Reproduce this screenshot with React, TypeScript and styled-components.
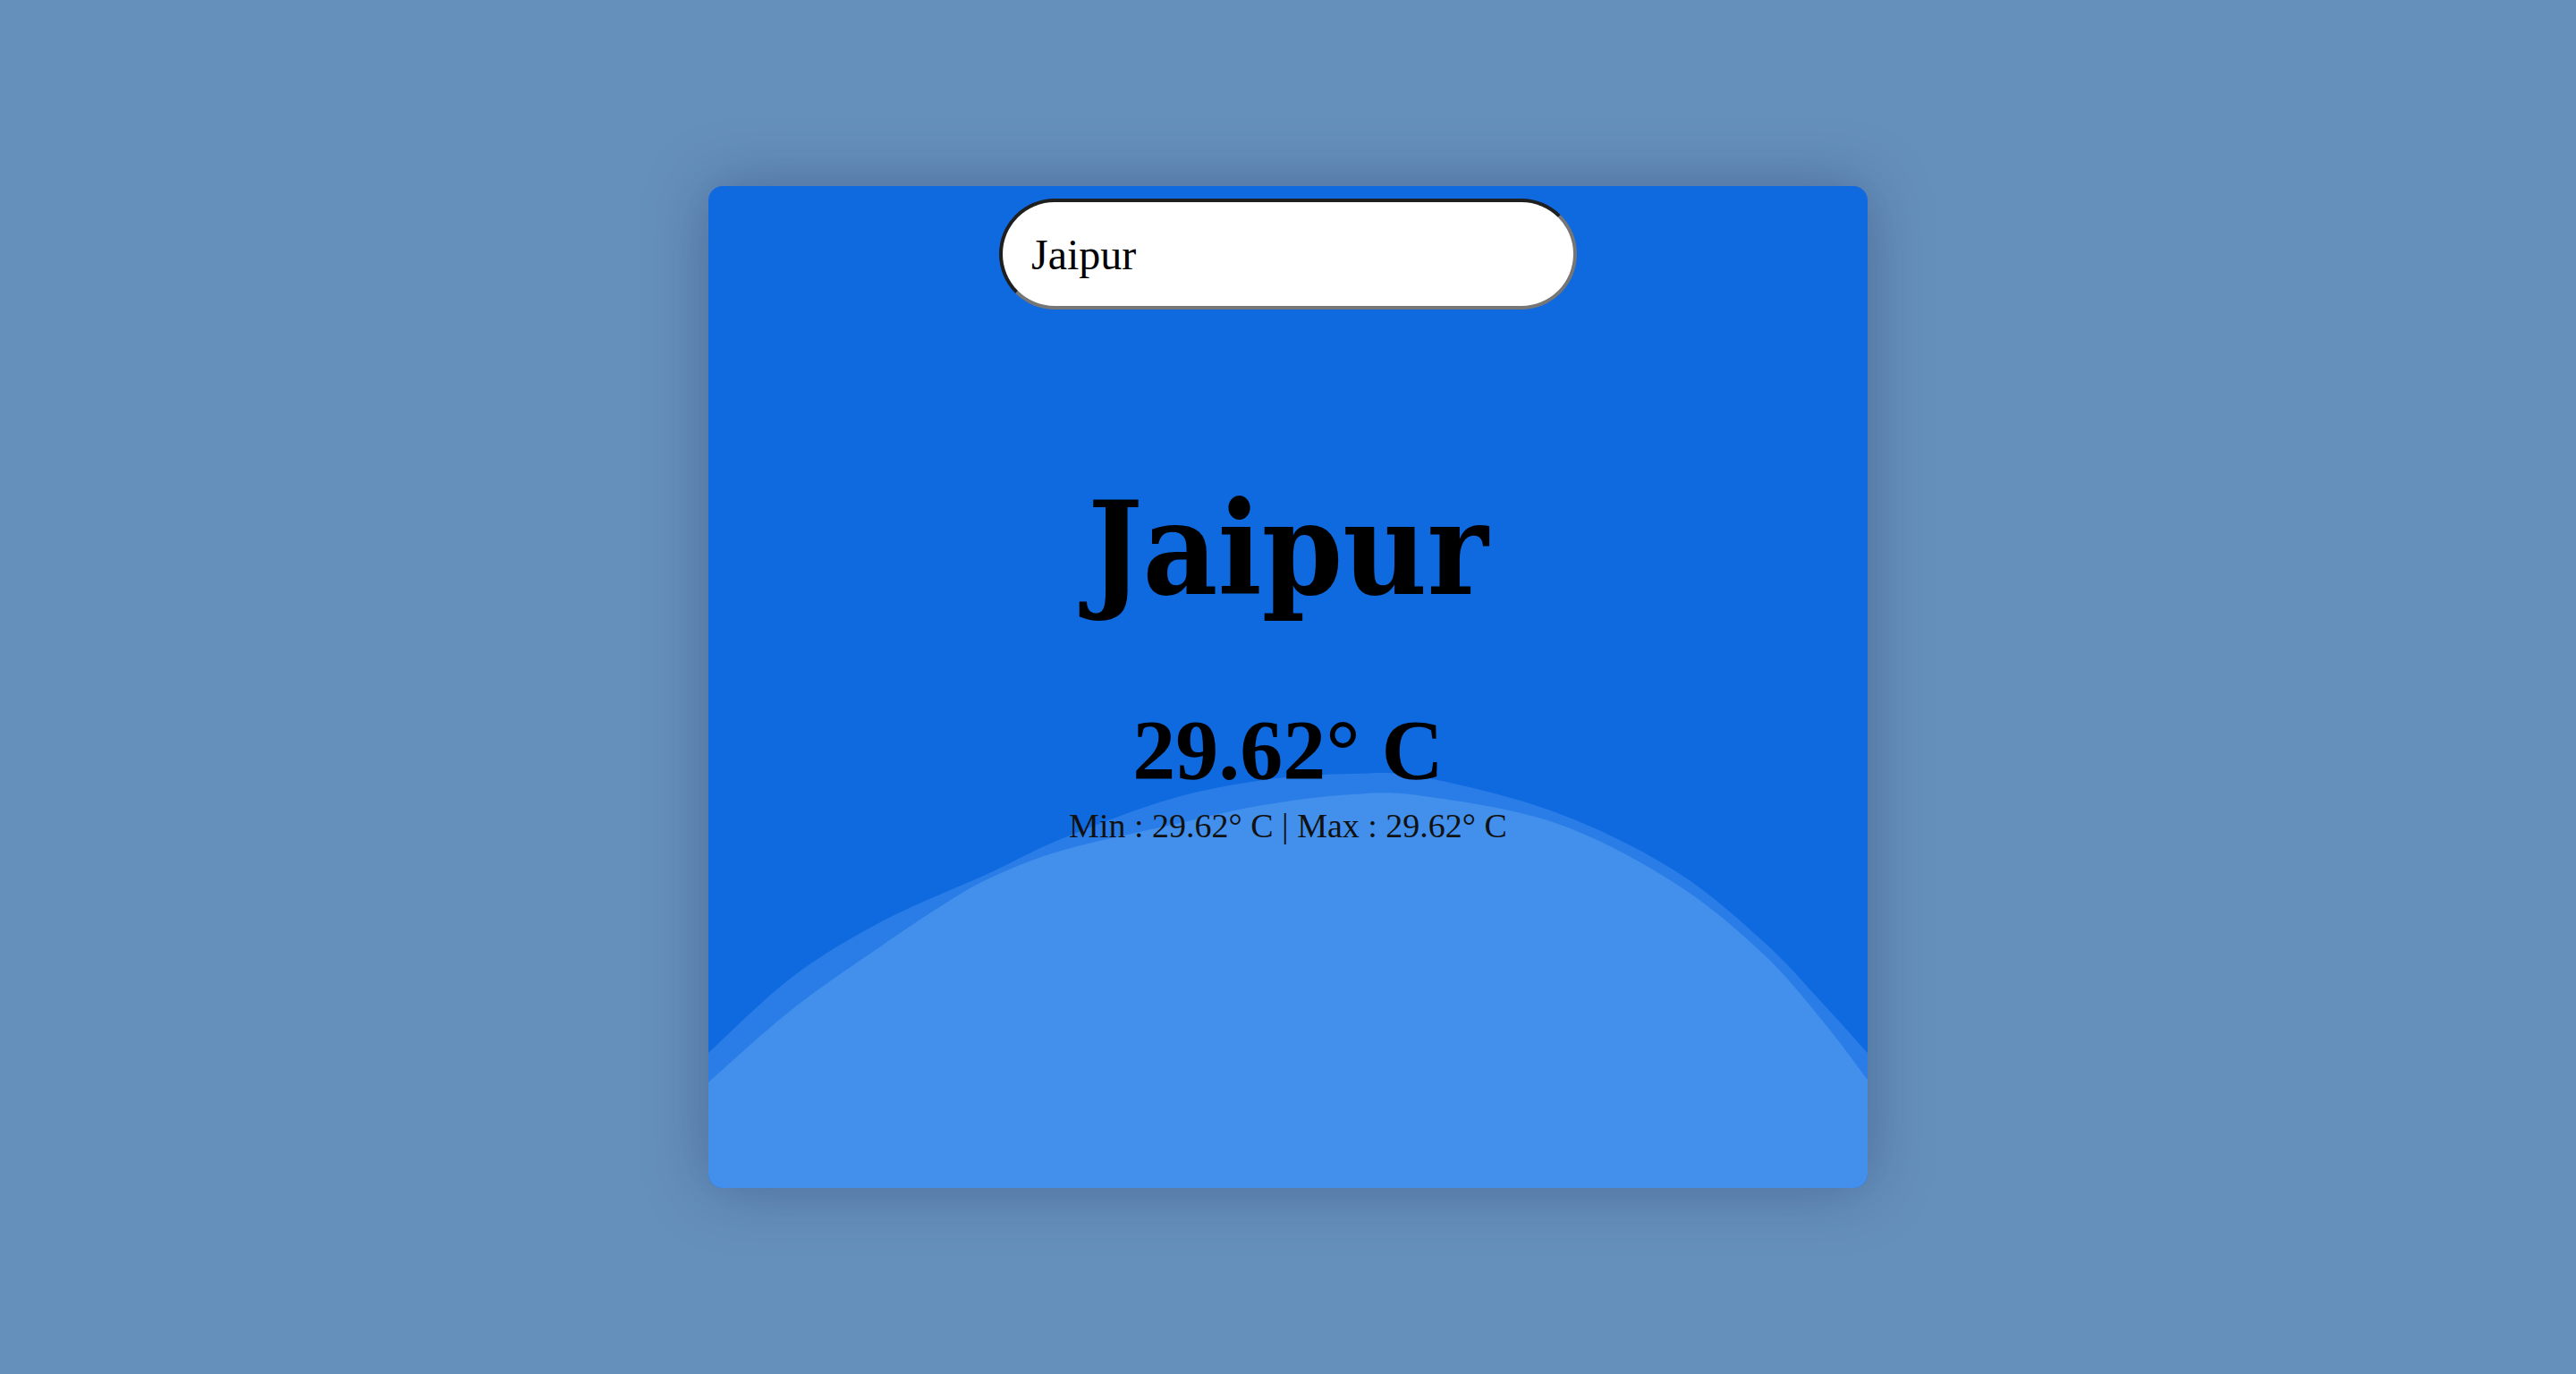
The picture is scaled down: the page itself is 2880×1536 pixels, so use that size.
import React from "react";
import styled, { createGlobalStyle } from "styled-components";

const GlobalStyle = createGlobalStyle`
  html, body {
    margin: 0;
    padding: 0;
  }
  body {
    background: #6690bc;
    font-family: "Liberation Serif", "Times New Roman", serif;
  }
`;

const Page = styled.div`
  min-height: 100vh;
  display: flex;
  align-items: center;
  justify-content: center;
`;

const Card = styled.div`
  position: relative;
  overflow: hidden;
  width: 1296px;
  height: 1120px;
  border-radius: 16px;
  background: #0f69df;
  box-shadow: 0 0 70px rgba(20, 40, 80, 0.35);
  display: flex;
  flex-direction: column;
  align-items: center;
`;

const Waves = styled.svg`
  position: absolute;
  inset: 0;
  width: 100%;
  height: 100%;
  z-index: 0;
`;

const Content = styled.div`
  position: relative;
  z-index: 1;
  display: flex;
  flex-direction: column;
  align-items: center;
  width: 100%;
`;

const Search = styled.input`
  box-sizing: border-box;
  width: 646px;
  height: 124px;
  margin-top: 14px;
  padding: 0 32px;
  border-radius: 62px;
  border: 4px solid;
  border-color: #1f1f1f #767676 #767676 #1f1f1f;
  background: #ffffff;
  color: #000;
  font-family: "Liberation Serif", "Times New Roman", serif;
  font-size: 48px;
  outline: none;
`;

const City = styled.h1`
  margin: 196px 0 0;
  font-family: "DejaVu Serif Condensed", "DejaVu Serif", serif;
  font-stretch: condensed;
  font-weight: 700;
  font-size: 144px;
  line-height: 144px;
  color: #000;
`;

const Temp = styled.div`
  margin-top: 105px;
  font-family: "Liberation Serif", "Times New Roman", serif;
  font-weight: 700;
  font-size: 96px;
  line-height: 96px;
  color: #000;
`;

const Range = styled.div`
  margin-top: 17px;
  font-family: "Liberation Serif", "Times New Roman", serif;
  font-size: 38px;
  line-height: 38px;
  color: #111;
`;

type Pt = [number, number];

const smooth = (pts: Pt[]) => {
  let d = `M${pts[0][0]},${pts[0][1]}`;
  for (let i = 0; i < pts.length - 1; i++) {
    const p0 = pts[i - 1] || pts[i];
    const p1 = pts[i];
    const p2 = pts[i + 1];
    const p3 = pts[i + 2] || p2;
    const c1x = p1[0] + (p2[0] - p0[0]) / 6;
    const c1y = p1[1] + (p2[1] - p0[1]) / 6;
    const c2x = p2[0] - (p3[0] - p1[0]) / 6;
    const c2y = p2[1] - (p3[1] - p1[1]) / 6;
    d += ` C${c1x},${c1y} ${c2x},${c2y} ${p2[0]},${p2[1]}`;
  }
  return d + " L1296,1120 L0,1120 Z";
};

// outer, rounder wave
const outerWave: Pt[] = [
  [0, 969], [94, 884], [194, 822], [314, 768], [394, 730], [514, 686],
  [620, 664], [720, 657], [800, 661], [947, 700], [1080, 765], [1180, 845],
  [1247, 915], [1296, 969],
];

// inner wave, straighter on the left, lighter
const innerWave: Pt[] = [
  [0, 1002], [94, 920], [194, 849], [260, 805], [314, 774], [394, 743],
  [514, 715], [620, 692], [720, 680], [800, 682], [947, 712], [1080, 779],
  [1180, 859], [1247, 935], [1296, 999],
];

export default function App() {
  return (
    <>
      <GlobalStyle />
      <Page>
        <Card>
          <Waves viewBox="0 0 1296 1120" preserveAspectRatio="none">
            <path d={smooth(outerWave)} fill="#2a7de7" />
            <path d={smooth(innerWave)} fill="#428fec" />
          </Waves>
          <Content>
            <Search defaultValue="Jaipur" />
            <City>Jaipur</City>
            <Temp>29.62° C</Temp>
            <Range>Min : 29.62° C | Max : 29.62° C</Range>
          </Content>
        </Card>
      </Page>
    </>
  );
}
